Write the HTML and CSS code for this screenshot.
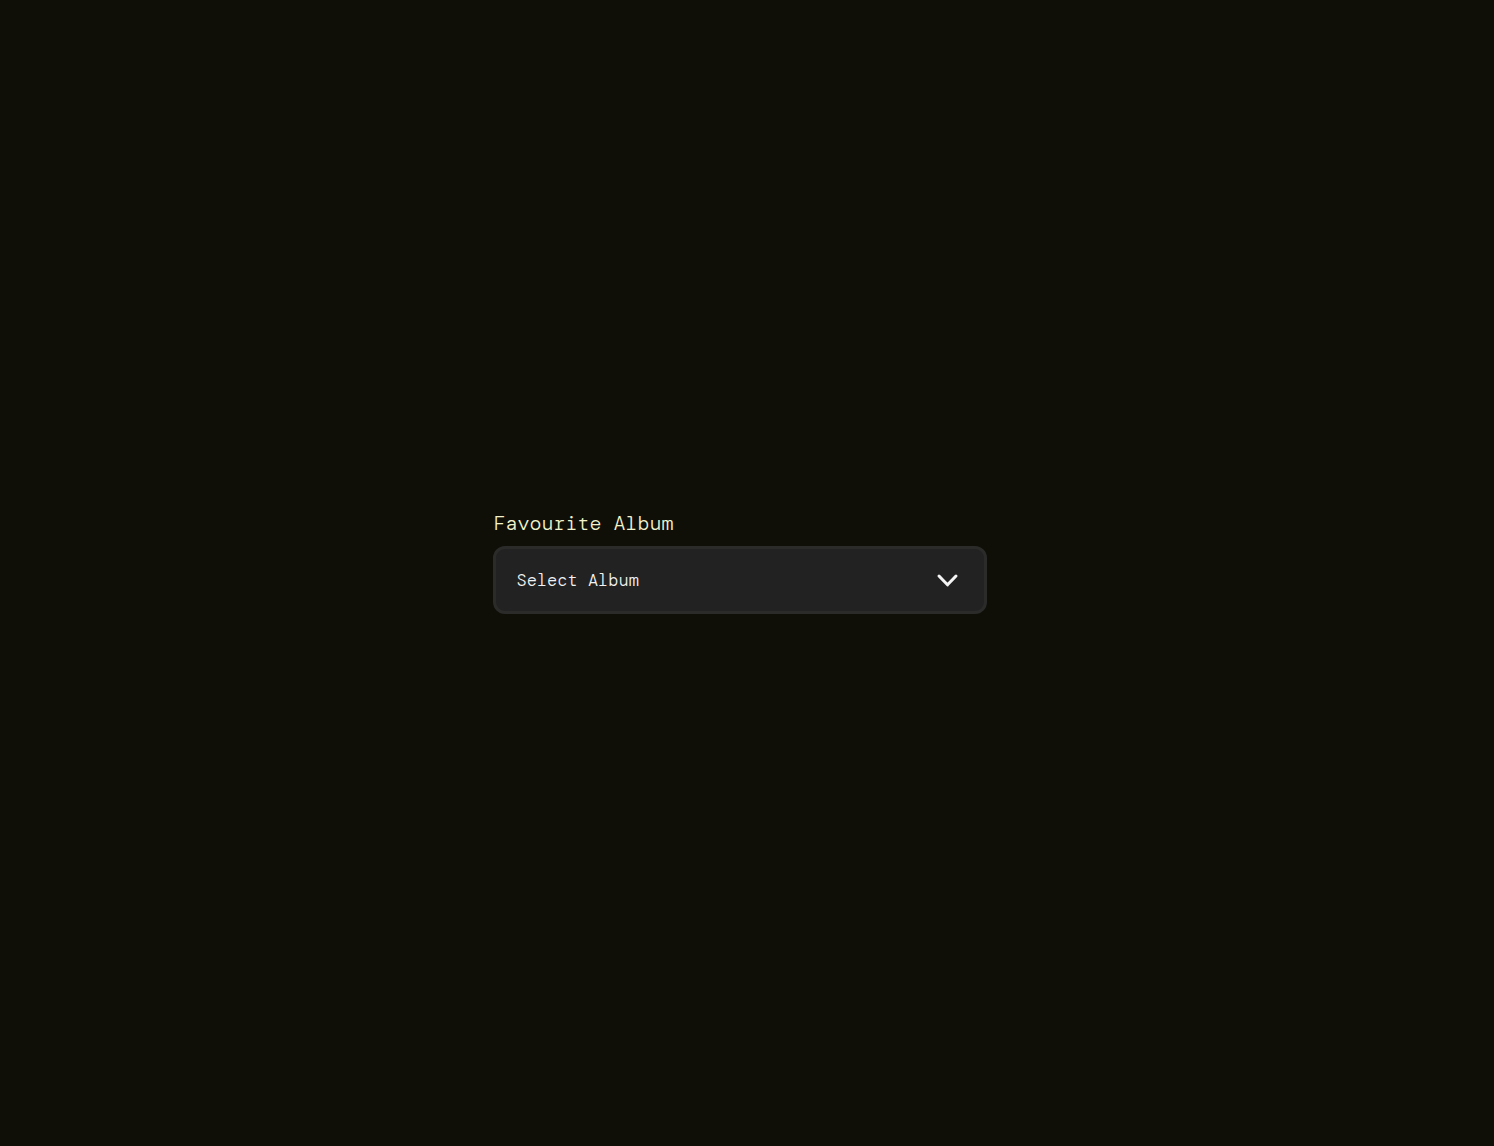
FILE: index.html
```html
<!DOCTYPE html>
<html lang="en">
<head>
    <meta charset="UTF-8">
    <meta name="viewport" content="width=device-width, initial-scale=1.0">
    <title>Favourite Album</title>
    <link rel="stylesheet" href="styles.css">
</head>
<body>

    <div class="field">
        <label for="album">Favourite Album</label>
        <div class="select-box">
            <select id="album">
                <option>Select Album</option>
            </select>
            <svg class="chevron" viewBox="0 0 24 24" aria-hidden="true">
                <path d="M4 8 L12.5 16.8 L21 8" />
            </svg>
        </div>
    </div>

</body>
</html>
```

FILE: styles.css
```css
* {
    box-sizing: border-box;
}

body {
    margin: 0;
    min-height: 100vh;
    padding: 0 14px 20px 0;
    background-color: #0f0f08;
    display: flex;
    justify-content: center;
    align-items: center;
    font-family: 'DM Mono', 'Liberation Mono', monospace;
    font-weight: 300;
}

.field {
    width: 33vw;
    display: flex;
    flex-direction: column;
    gap: 12px;
}

label {
    color: #f2f2cc;
    font-size: 20px;
    line-height: 22px;
}

.select-box {
    display: grid;
    align-items: center;
}

select {
    grid-area: 1 / 1;
    width: 100%;
    height: 68px;
    padding: 0 20px;
    appearance: none;
    background-color: #222222;
    color: #f2f2f2;
    border: 3px solid #2b2b2a;
    border-radius: 12px;
    font-family: inherit;
    font-size: 17px;
    font-weight: inherit;
    cursor: pointer;
}

.chevron {
    grid-area: 1 / 1;
    justify-self: end;
    width: 24px;
    height: 24px;
    margin-right: 28px;
    fill: none;
    stroke: #f5f5f5;
    stroke-width: 3;
    stroke-linecap: round;
    stroke-linejoin: round;
    pointer-events: none;
}
```
